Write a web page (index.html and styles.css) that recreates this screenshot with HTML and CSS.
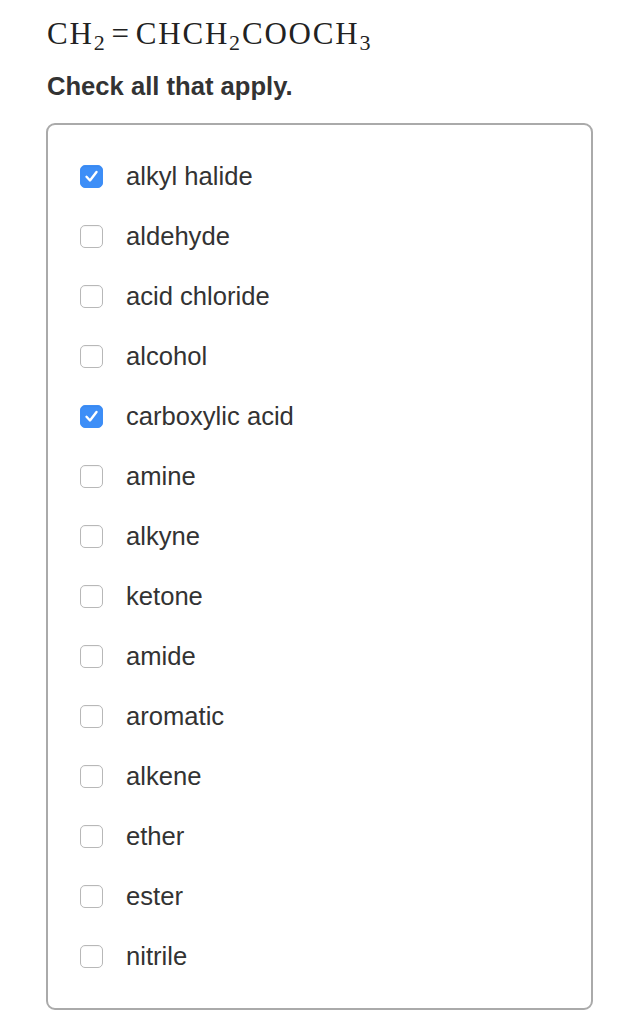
FILE: index.html
```html
<!DOCTYPE html>
<html>
<head>
<meta charset="utf-8">
<link rel="stylesheet" href="styles.css">
</head>
<body>
<div class="page">
  <div class="formula">CH<sub>2</sub><span class="eq">=</span>CHCH<sub>2</sub>COOCH<sub>3</sub></div>
  <div class="prompt">Check all that apply.</div>
  <div class="box">
    <div class="row"><span class="cb checked"><svg viewBox="0 0 23 23" width="23" height="23"><path d="M6.5 11.8 L10 15.5 L16.5 7" fill="none" stroke="#fff" stroke-width="2.4" stroke-linecap="round" stroke-linejoin="round"/></svg></span><span class="label">alkyl halide</span></div>
    <div class="row"><span class="cb"></span><span class="label">aldehyde</span></div>
    <div class="row"><span class="cb"></span><span class="label">acid chloride</span></div>
    <div class="row"><span class="cb"></span><span class="label">alcohol</span></div>
    <div class="row"><span class="cb checked"><svg viewBox="0 0 23 23" width="23" height="23"><path d="M6.5 11.8 L10 15.5 L16.5 7" fill="none" stroke="#fff" stroke-width="2.4" stroke-linecap="round" stroke-linejoin="round"/></svg></span><span class="label">carboxylic acid</span></div>
    <div class="row"><span class="cb"></span><span class="label">amine</span></div>
    <div class="row"><span class="cb"></span><span class="label">alkyne</span></div>
    <div class="row"><span class="cb"></span><span class="label">ketone</span></div>
    <div class="row"><span class="cb"></span><span class="label">amide</span></div>
    <div class="row"><span class="cb"></span><span class="label">aromatic</span></div>
    <div class="row"><span class="cb"></span><span class="label">alkene</span></div>
    <div class="row"><span class="cb"></span><span class="label">ether</span></div>
    <div class="row"><span class="cb"></span><span class="label">ester</span></div>
    <div class="row"><span class="cb"></span><span class="label">nitrile</span></div>
  </div>
</div>
</body>
</html>
```
FILE: styles.css
```css
html, body {
  margin: 0;
  padding: 0;
  background: #fff;
}
.page {
  padding: 14px 0 0 46px;
  width: 547px;
  font-family: "Liberation Sans", Arial, sans-serif;
  color: #333;
}
.formula {
  font-family: "Liberation Serif", "Times New Roman", serif;
  font-size: 31px;
  line-height: 40px;
  color: #222;
  padding-left: 1px;
  letter-spacing: 1.8px;
}
.formula sub {
  font-size: 22px;
  vertical-align: -6px;
  line-height: 0;
}
.eq {
  padding: 0 5px;
}
.prompt {
  margin-top: 17px;
  font-weight: bold;
  font-size: 25.6px;
  line-height: 30px;
  padding-left: 1px;
}
.box {
  margin-top: 22px;
  border: 2px solid #aaa;
  border-radius: 9px;
  padding: 21px 0 22px 32px;
}
.row {
  display: flex;
  align-items: center;
  height: 60px;
  gap: 23px;
}
.cb {
  box-sizing: border-box;
  width: 23px;
  height: 23px;
  border: 1px solid #b8b8b8;
  border-radius: 5px;
  background: #fff;
  display: block;
  flex: none;
  box-shadow: inset 0 1px 1px rgba(0,0,0,0.04);
}
.cb svg {
  display: block;
}
.cb.checked {
  background: #3d8ef7;
  border-color: #3d8ef7;
}
.cb.checked svg {
  margin: -1px;
}
.label {
  font-size: 25.6px;
  line-height: 30px;
  color: #333;
}
```
